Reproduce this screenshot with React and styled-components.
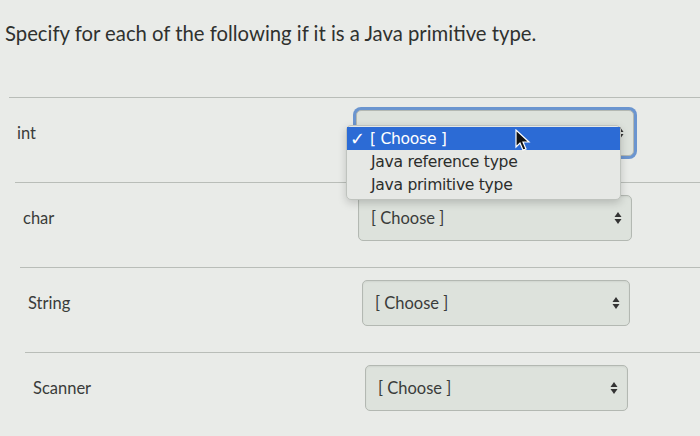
import React from 'react'
import styled, { createGlobalStyle } from 'styled-components'

const GlobalStyle = createGlobalStyle`
  body {
    margin: 0;
    background: #e9ebe8;
    font-family: Lato, "Open Sans", sans-serif;
    color: #3b3d3b;
  }
`

const Page = styled.div`
  width: 700px;
  height: 436px;
  overflow: hidden;
  padding-left: 5px;
  box-sizing: border-box;
`

const Title = styled.h1`
  margin: 21px 0 0;
  font-size: 20.3px;
  line-height: 25px;
  font-weight: 400;
  color: #2f312f;
`

const List = styled.div`
  margin-top: 51px;
`

const Row = styled.div`
  display: grid;
  grid-template-columns: 1fr 274px;
  align-items: center;
  margin-left: ${p => p.$indent}px;
  padding: 12px 68px 26px 0;
  border-top: 1px solid #b9bdb8;
`

const Label = styled.div`
  padding-left: 8px;
  font-size: 16.5px;
  color: #3a3c3a;
`

const SelectWrap = styled.div`
  position: relative;
  margin-left: ${p => p.$left}px;
  margin-right: ${p => p.$right}px;
`

const Select = styled.div`
  height: 46px;
  box-sizing: border-box;
  display: flex;
  align-items: center;
  justify-content: space-between;
  padding: 0 9px 0 12px;
  background: #dde2dc;
  border: 1px solid #b3b8b2;
  border-radius: 5px;
  box-shadow: ${p => (p.$focused ? '0 0 0 3px #6b95cf' : 'inset 0 1px 2px rgba(0,0,0,0.06)')};
  font-size: 16.5px;
  color: #3a3c3a;
`

const Arrows = styled.svg`
  width: 8px;
  height: 14px;
  flex: none;
`

const Menu = styled.div`
  position: absolute;
  top: 15px;
  left: -10px;
  width: 273px;
  padding: 1px 0 3px;
  background: #e6e8e5;
  border: 1px solid #bfc3be;
  border-radius: 5px;
  box-shadow: 0 3px 8px rgba(0, 0, 0, 0.18);
  font-family: "DejaVu Sans", sans-serif;
  font-size: 15.6px;
  z-index: 2;
`

const Option = styled.div`
  height: 23px;
  display: flex;
  align-items: center;
  padding-left: ${p => (p.$selected ? '3px' : '24px')};
  background: ${p => (p.$selected ? '#2c6bd5' : 'transparent')};
  color: ${p => (p.$selected ? '#fff' : '#2c2e2c')};
  letter-spacing: -0.3px;
`

const Check = styled.span`
  width: 20px;
  font-size: 18px;
  font-weight: 700;
`

const Pointer = styled.svg`
  position: absolute;
  top: 3px;
  left: 168px;
  width: 16px;
  height: 23px;
`

const SortArrows = () => (
  <Arrows viewBox="0 0 8 14">
    <path d="M4 1 L7.5 6 L0.5 6 Z" fill="#333" />
    <path d="M4 13 L7.5 8 L0.5 8 Z" fill="#333" />
  </Arrows>
)

const rows = [
  { name: 'int', indent: 4, left: -2, right: -2, open: true },
  { name: 'char', indent: 10, left: 0, right: 0 },
  { name: 'String', indent: 15, left: 4, right: 2 },
  { name: 'Scanner', indent: 20, left: 7, right: 4 },
]

const options = ['[ Choose ]', 'Java reference type', 'Java primitive type']

export default function App() {
  return (
    <Page>
      <GlobalStyle />
      <Title>Specify for each of the following if it is a Java primitive type.</Title>
      <List>
        {rows.map(r => (
          <Row key={r.name} $indent={r.indent}>
            <Label>{r.name}</Label>
            <SelectWrap $left={r.left} $right={r.right}>
              <Select $focused={r.open}>
                <span>{r.open ? '' : '[ Choose ]'}</span>
                <SortArrows />
              </Select>
              {r.open && (
                <Menu>
                  {options.map((o, i) => (
                    <Option key={o} $selected={i === 0}>
                      {i === 0 && <Check>✓</Check>}
                      {o}
                    </Option>
                  ))}
                  <Pointer viewBox="0 0 16 23">
                    <path d="M1 1 L1 18 L5 14 L8 21 L11 20 L8 13 L14 13 Z" fill="#111" stroke="#fff" strokeWidth="1.2" />
                  </Pointer>
                </Menu>
              )}
            </SelectWrap>
          </Row>
        ))}
      </List>
    </Page>
  )
}
